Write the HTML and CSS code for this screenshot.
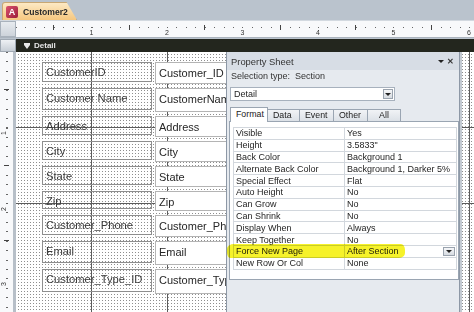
FILE: index.html
```html
<!DOCTYPE html>
<html lang="en">
<head>
  <meta charset="UTF-8" />
  <title>Customer2</title>
  <link rel="stylesheet" href="styles.css">
</head>
<body>
  <div class="doc-tabs">
    <div class="doc-tab"><span class="app-icon">A</span>Customer2</div>
  </div>

  <div class="ruler-row">
    <div class="corner"></div>
    <div class="hruler">
      <span>1</span><span>2</span><span>3</span><span>4</span><span>5</span><span>6</span>
    </div>
  </div>

  <div class="section-row">
    <div class="selector"></div>
    <div class="section-bar">
      <svg class="section-icon" width="8" height="8" viewBox="0 0 8 8"><path d="M1 1 L7 1 L7 3 L4 7 L1 3 Z" fill="#e8e8e8"/></svg>
      Detail
    </div>
  </div>

  <div class="design-row">
    <div class="vruler">
      <span>1</span><span>2</span><span>3</span>
    </div>

    <div class="canvas">
      <div class="fields">
        <div class="field h22"><div class="lbl">CustomerID</div><div class="txt">Customer_ID</div></div>
        <div class="field h24"><div class="lbl">Customer Name</div><div class="txt">CustomerName</div></div>
        <div class="field h21"><div class="lbl">Address</div><div class="txt">Address</div></div>
        <div class="field h21"><div class="lbl">City</div><div class="txt">City</div></div>
        <div class="field h21"><div class="lbl">State</div><div class="txt">State</div></div>
        <div class="field h20"><div class="lbl">Zip</div><div class="txt">Zip</div></div>
        <div class="field h22"><div class="lbl">Customer_Phone</div><div class="txt">Customer_Phone</div></div>
        <div class="field h24"><div class="lbl">Email</div><div class="txt">Email</div></div>
        <div class="field h25"><div class="lbl">Customer_Type_ID</div><div class="txt">Customer_Type_ID</div></div>
      </div>

      <div class="sheet">
        <div class="sheet-head">
          <span>Property Sheet</span>
          <span class="sheet-ctrl"><span class="tri"></span>&#x2715;</span>
        </div>
        <div class="sel-type">Selection type:&nbsp; Section</div>
        <div class="combo"><span>Detail</span><span class="combo-btn"><span class="tri"></span></span></div>
        <div class="tabs">
          <span class="tab active">Format</span>
          <span class="tab">Data</span>
          <span class="tab">Event</span>
          <span class="tab">Other</span>
          <span class="tab all">All</span>
        </div>
        <div class="tab-body">
          <table class="props">
            <tr><td>Visible</td><td>Yes</td></tr>
            <tr><td>Height</td><td>3.5833"</td></tr>
            <tr><td>Back Color</td><td>Background 1</td></tr>
            <tr><td>Alternate Back Color</td><td>Background 1, Darker 5%</td></tr>
            <tr><td>Special Effect</td><td>Flat</td></tr>
            <tr><td>Auto Height</td><td>No</td></tr>
            <tr><td>Can Grow</td><td>No</td></tr>
            <tr><td>Can Shrink</td><td>No</td></tr>
            <tr><td>Display When</td><td>Always</td></tr>
            <tr><td>Keep Together</td><td>No</td></tr>
            <tr class="marked"><td>Force New Page</td><td><span class="val-row">After Section<span class="cell-btn"><span class="tri"></span></span></span></td></tr>
            <tr><td>New Row Or Col</td><td>None</td></tr>
          </table>
          <span class="marker"></span>
        </div>
      </div>
    </div>
  </div>
</body>
</html>
```

FILE: styles.css
```css
body {
  margin: 0;
  width: 474px;
  height: 312px;
  overflow: hidden;
  font-family: 'Liberation Sans', Arial, sans-serif;
  background: #bac3cd;
  color: #222;
}

/* document tab strip */
.doc-tabs {
  height: 20px;
  padding-left: 2px;
  border-bottom: 1px solid #d3d9e0;
  display: flex;
  align-items: flex-end;
}

.doc-tab {
  width: 70px;
  height: 17px;
  display: flex;
  align-items: center;
  gap: 5px;
  padding-left: 3px;
  font-size: 8.6px;
  font-weight: bold;
  color: #2a2a2a;
  background: linear-gradient(to bottom, #fde9c4, #f6c77f);
  border: 1px solid #c9a874;
  border-bottom: none;
  border-radius: 3px 0 0 0;
  clip-path: polygon(0 0, 86% 0, 100% 100%, 0 100%);
}

.app-icon {
  width: 12px;
  height: 12px;
  border-radius: 2px;
  background: linear-gradient(135deg, #d9526e, #9c1d3a);
  color: #fff;
  font-size: 9px;
  line-height: 12px;
  text-align: center;
}

/* rulers */
.ruler-row {
  height: 16px;
  display: flex;
  border-bottom: 1px solid #aab3bd;
}

.corner {
  flex: none;
  width: 14px;
  border: 1px solid #a9b2bc;
  background: linear-gradient(#e7ebef, #cdd3da);
}

.hruler {
  flex: 1;
  min-width: 0;
  overflow: hidden;
  display: flex;
  padding-left: 73.5px;
  font-size: 7px;
  line-height: 7px;
  color: #333;
  padding-top: 8px;
  background-color: #f8f9fb;
  background-image:
    repeating-linear-gradient(90deg, transparent 0 37.25px, #444 37.25px 38.25px, transparent 38.25px 75.5px),
    repeating-linear-gradient(90deg, #666 0 1px, transparent 1px 9.4375px);
  background-size: 100% 5px, 100% 1px;
  background-position: 0 4px, 0 6px;
  background-repeat: no-repeat;
}

.hruler span {
  flex: none;
  width: 75.5px;
}

.section-row {
  height: 13px;
  margin-top: 1px;
  display: flex;
}

.selector {
  flex: none;
  width: 14px;
  border: 1px solid #a0a9b3;
  background: linear-gradient(#eef1f4, #c7ced6);
}

.section-bar {
  flex: 1;
  display: flex;
  align-items: center;
  gap: 3px;
  padding-left: 7px;
  background: #23261e;
  color: #e6e6e6;
  font-size: 8px;
  font-weight: bold;
}

.design-row {
  display: flex;
  height: 261px;
}

.vruler {
  flex: none;
  box-sizing: border-box;
  width: 16px;
  border-right: 3px solid #b7bfc8;
  display: flex;
  flex-direction: column;
  padding-top: 76px;
  font-size: 7px;
  color: #333;
  background-color: #f8f9fb;
  background-image:
    repeating-linear-gradient(transparent 0 37.25px, #444 37.25px 38.25px, transparent 38.25px 75.5px),
    repeating-linear-gradient(#666 0 1px, transparent 1px 9.4375px);
  background-size: 5px 100%, 2px 100%;
  background-position: 4px 0, 6px 0;
  background-repeat: no-repeat;
}

.vruler span {
  flex: none;
  height: 75.5px;
  width: 10px;
  text-align: center;
  transform: rotate(-90deg);
  transform-origin: 5px 5px;
}

/* design grid */
.canvas {
  flex: 1;
  min-width: 0;
  position: relative;
  overflow: hidden;
  background-color: #fff;
  background-image:
    repeating-linear-gradient(90deg, transparent 0 74.5px, #5c5c5c 74.5px 75.5px),
    repeating-linear-gradient(transparent 0 74.5px, #5c5c5c 74.5px 75.5px),
    linear-gradient(90deg, #fff 2px, transparent 2px),
    linear-gradient(#fff 2px, #8e8e8e 2px);
  background-size: 100% 100%, 100% 100%, 3px 3px, 3px 3px;
  background-position: 1px 0, 0 1px, 0 0, 0 0;
}

.fields {
  display: flex;
  flex-direction: column;
  gap: 4px;
  padding: 10px 0 0 26px;
}

.field {
  display: flex;
  gap: 3px;
}

.h20 { height: 20px; }
.h21 { height: 21px; }
.h22 { height: 22px; }
.h24 { height: 24px; }
.h25 { height: 25px; }

.lbl {
  box-sizing: border-box;
  width: 110px;
  margin-bottom: 2px;
  border: 1px solid #8e8e8e;
  padding: 2px 0 0 3px;
  font-size: 11.2px;
  line-height: 14px;
  color: #3a3a3a;
  white-space: nowrap;
}

.txt {
  box-sizing: border-box;
  width: 120px;
  border: 1px solid #b4b4b4;
  background: #fff;
  padding: 3px 0 0 3px;
  font-size: 11px;
  line-height: 14px;
  color: #262626;
  white-space: nowrap;
}

/* property sheet */
.sheet {
  position: absolute;
  left: 210px;
  top: 0;
  bottom: 0;
  width: 232px;
  background: #e6eaef;
  border-left: 1px solid #8d98a6;
  border-right: 1px solid #8d98a6;
  box-shadow: 2px 0 0 #c4cbd3;
  font-size: 9px;
  color: #1e1e1e;
}

.sheet-head {
  height: 18px;
  display: flex;
  align-items: center;
  justify-content: space-between;
  padding: 0 5px 0 4px;
  background: #d7dde5;
  font-size: 9.4px;
  color: #333;
}

.sheet-ctrl {
  display: flex;
  align-items: center;
  gap: 3px;
  font-size: 8px;
  font-weight: bold;
  color: #333;
}

.tri {
  width: 0;
  height: 0;
  border-left: 3px solid transparent;
  border-right: 3px solid transparent;
  border-top: 3px solid #222;
}

.sel-type {
  height: 12px;
  line-height: 12px;
  padding-left: 4px;
  color: #333;
}

.combo {
  margin: 5px 0 0 3px;
  width: 165px;
  height: 14px;
  background: #fff;
  border: 1px solid #a7b1bd;
  display: flex;
  align-items: center;
  justify-content: space-between;
  padding-left: 3px;
  box-sizing: border-box;
}

.combo-btn, .cell-btn {
  width: 10px;
  height: 10px;
  margin-right: 1px;
  display: flex;
  align-items: center;
  justify-content: center;
  background: linear-gradient(#f6f7f9, #d6dbe1);
  border: 1px solid #9aa3ae;
  box-sizing: border-box;
}

.cell-btn {
  width: 12px;
  height: 9px;
}

.tabs {
  display: flex;
  align-items: flex-end;
  height: 14px;
  margin: 6px 0 0 3px;
}

.tab {
  height: 11px;
  line-height: 11px;
  padding: 0 5px;
  margin-left: -1px;
  border: 1px solid #9aa5b2;
  border-bottom: none;
  background: linear-gradient(#f1f3f6, #dce1e7);
  color: #222;
  font-size: 8.8px;
}

.tab.active {
  height: 14px;
  line-height: 13px;
  width: 26px;
  background: #fff;
  margin-left: 0;
  position: relative;
  z-index: 1;
  margin-bottom: -1px;
}

.tab:nth-child(2) { width: 21px; }
.tab:nth-child(3) { width: 23px; }
.tab:nth-child(4) { width: 23px; }
.tab.all { width: 22px; text-align: center; }

.tab-body {
  position: relative;
  margin: 0 0 0 2px;
  width: 230px;
  height: 159px;
  box-sizing: border-box;
  background: #fff;
  border: 1px solid #9aa5b2;
  padding: 5px 0 0 3px;
}

.props {
  border-collapse: collapse;
  width: 224px;
  table-layout: fixed;
}

.props td {
  height: 11.8px;
  padding: 0 0 0 2px;
  border: 1px solid #d2d7dd;
  line-height: 10px;
  white-space: nowrap;
  overflow: hidden;
  box-sizing: border-box;
}

.props td:first-child { width: 111px; }

.val-row {
  display: flex;
  align-items: center;
  justify-content: space-between;
}

.marker {
  position: absolute;
  left: -3px;
  top: 122px;
  width: 178px;
  height: 14px;
  background: #f6f22a;
  border-radius: 7px 4px 6px 3px / 5px 6px 5px 6px;
  filter: blur(0.7px);
  mix-blend-mode: multiply;
}
```
